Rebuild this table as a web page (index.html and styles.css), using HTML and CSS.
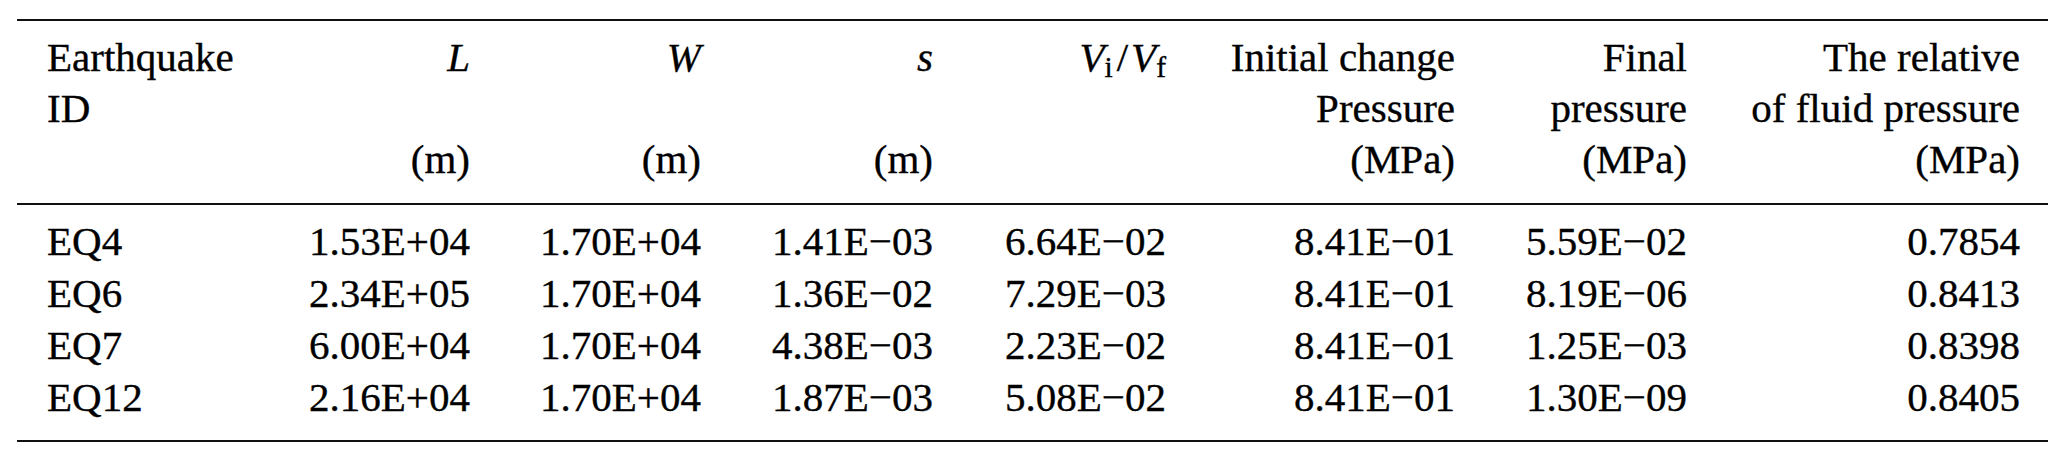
FILE: index.html
```html
<!DOCTYPE html>
<html lang="en">
<head>
<meta charset="utf-8">
<title>Earthquake fluid pressure table</title>
<link rel="stylesheet" href="styles.css">
</head>
<body>
<div class="wrap">
<table class="data">
  <colgroup>
    <col class="c1"><col class="c2"><col class="c3"><col class="c4"><col class="c5"><col class="c6"><col class="c7"><col class="c8">
  </colgroup>
  <thead>
    <tr>
      <th class="left">Earthquake<br>ID<br>&nbsp;</th>
      <th><i>L</i><br>&nbsp;<br>(m)</th>
      <th><i>W</i><br>&nbsp;<br>(m)</th>
      <th><i>s</i><br>&nbsp;<br>(m)</th>
      <th><span class="frac"><i>V</i><sub>i</sub><span class="sl">/</span><i>V</i><sub>f</sub></span><br>&nbsp;<br>&nbsp;</th>
      <th>Initial change<br>Pressure<br>(MPa)</th>
      <th>Final<br>pressure<br>(MPa)</th>
      <th class="last">The relative<br>of fluid pressure<br>(MPa)</th>
    </tr>
  </thead>
  <tbody>
    <tr>
      <td class="left">EQ4</td><td>1.53E+04</td><td>1.70E+04</td><td>1.41E&minus;03</td><td>6.64E&minus;02</td><td>8.41E&minus;01</td><td>5.59E&minus;02</td><td class="last">0.7854</td>
    </tr>
    <tr>
      <td class="left">EQ6</td><td>2.34E+05</td><td>1.70E+04</td><td>1.36E&minus;02</td><td>7.29E&minus;03</td><td>8.41E&minus;01</td><td>8.19E&minus;06</td><td class="last">0.8413</td>
    </tr>
    <tr>
      <td class="left">EQ7</td><td>6.00E+04</td><td>1.70E+04</td><td>4.38E&minus;03</td><td>2.23E&minus;02</td><td>8.41E&minus;01</td><td>1.25E&minus;03</td><td class="last">0.8398</td>
    </tr>
    <tr>
      <td class="left">EQ12</td><td>2.16E+04</td><td>1.70E+04</td><td>1.87E&minus;03</td><td>5.08E&minus;02</td><td>8.41E&minus;01</td><td>1.30E&minus;09</td><td class="last">0.8405</td>
    </tr>
  </tbody>
</table>
</div>
</body>
</html>
```
FILE: styles.css
```css
html, body {
  margin: 0;
  padding: 0;
  background: #ffffff;
}

.wrap {
  padding: 19px 19px 0 17px;
}

.data {
  width: 2031px;
  table-layout: fixed;
  border-collapse: separate;
  border-spacing: 0;
  font-family: "Liberation Serif", "Times New Roman", serif;
  font-size: 41px;
  color: #000000;
  -webkit-text-stroke: 0.35px #000000;
}

.c1 { width: 283px; }
.c2 { width: 170px; }
.c3 { width: 231px; }
.c4 { width: 232px; }
.c5 { width: 233px; }
.c6 { width: 289px; }
.c7 { width: 232px; }
.c8 { width: 361px; }

.data th,
.data td {
  padding: 0;
  text-align: right;
  white-space: nowrap;
  vertical-align: top;
}

.data th {
  font-weight: normal;
  line-height: 51px;
  padding-top: 11px;
  padding-bottom: 18px;
  border-top: 2px solid #111111;
  border-bottom: 2px solid #111111;
}

.data td {
  line-height: 52px;
}

.data .left {
  text-align: left;
  padding-left: 30px;
}

.data .last {
  padding-right: 28px;
}

.data tbody tr:first-child td {
  padding-top: 10px;
}

.data tbody tr:last-child td {
  padding-bottom: 17px;
  border-bottom: 2px solid #111111;
}

.frac .sl {
  margin: 0 3px 0 4px;
}

.data sub {
  font-size: 0.72em;
  line-height: 0;
  vertical-align: -0.22em;
}
```
